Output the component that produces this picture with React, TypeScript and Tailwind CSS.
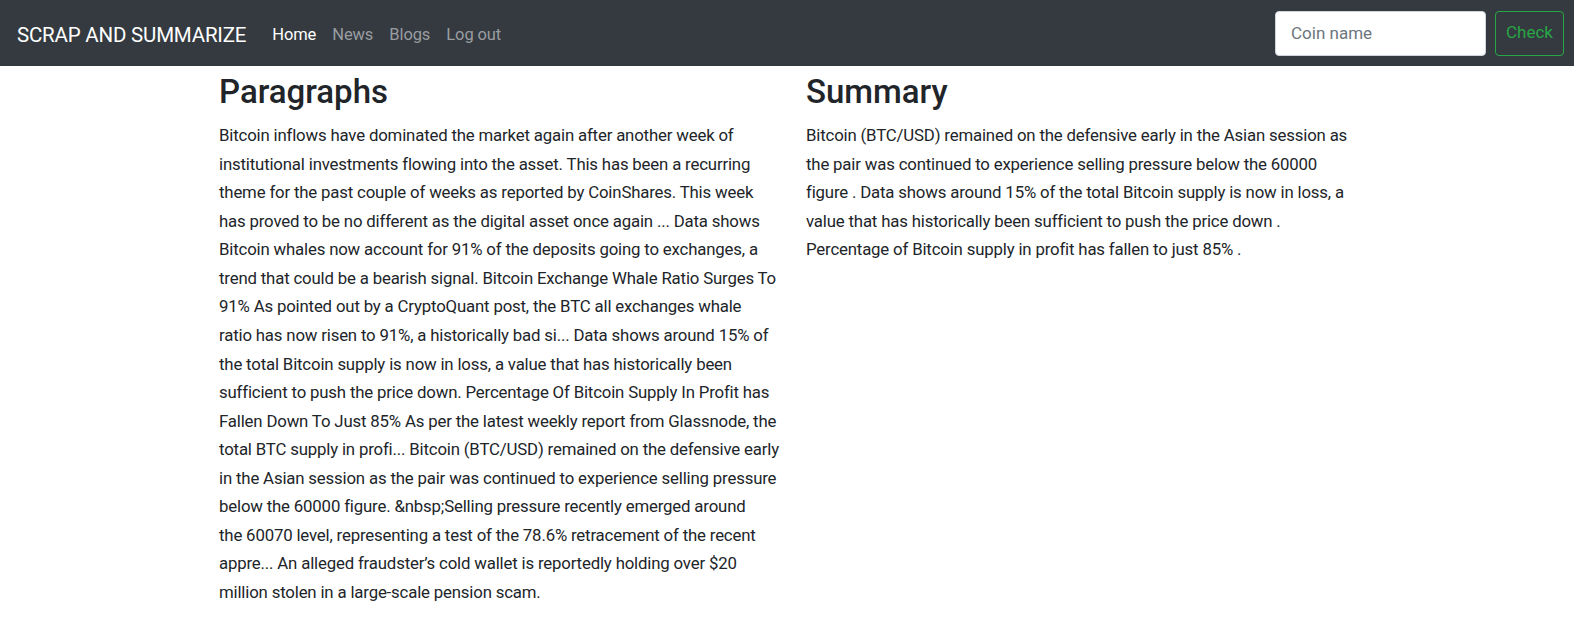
import React from "react";

const paragraphLines = [
  "Bitcoin inflows have dominated the market again after another week of",
  "institutional investments flowing into the asset. This has been a recurring",
  "theme for the past couple of weeks as reported by CoinShares. This week",
  "has proved to be no different as the digital asset once again ... Data shows",
  "Bitcoin whales now account for 91% of the deposits going to exchanges, a",
  "trend that could be a bearish signal. Bitcoin Exchange Whale Ratio Surges To",
  "91% As pointed out by a CryptoQuant post, the BTC all exchanges whale",
  "ratio has now risen to 91%, a historically bad si... Data shows around 15% of",
  "the total Bitcoin supply is now in loss, a value that has historically been",
  "sufficient to push the price down. Percentage Of Bitcoin Supply In Profit has",
  "Fallen Down To Just 85% As per the latest weekly report from Glassnode, the",
  "total BTC supply in profi... Bitcoin (BTC/USD) remained on the defensive early",
  "in the Asian session as the pair was continued to experience selling pressure",
  "below the 60000 figure. &nbsp;Selling pressure recently emerged around",
  "the 60070 level, representing a test of the 78.6% retracement of the recent",
  "appre... An alleged fraudster\u2019s cold wallet is reportedly holding over $20",
  "million stolen in a large-scale pension scam.",
];

const summaryLines = [
  "Bitcoin (BTC/USD) remained on the defensive early in the Asian session as",
  "the pair was continued to experience selling pressure below the 60000",
  "figure . Data shows around 15% of the total Bitcoin supply is now in loss, a",
  "value that has historically been sufficient to push the price down .",
  "Percentage of Bitcoin supply in profit has fallen to just 85% .",
];

function Lines({ lines }: { lines: string[] }) {
  return (
    <p className="mt-[2px] text-[16.8px] leading-[28.56px] tracking-[-0.17px] text-[#212529]">
      {lines.map((l, i) => (
        <React.Fragment key={i}>
          <span className="whitespace-nowrap">{l}</span>
          {i < lines.length - 1 && <br />}
        </React.Fragment>
      ))}
    </p>
  );
}

export default function App() {
  return (
    <div className="h-[620px] overflow-hidden bg-white font-['Roboto',sans-serif] text-[#212529]">
      <nav className="flex h-[66px] items-center bg-[#343a40] pl-[17px] pr-[10px]">
        <div className="flex items-center pt-[4px]">
          <span className="text-[20.5px] text-white tracking-[-0.2px]">SCRAP AND SUMMARIZE</span>
          <div className="ml-[26px] flex items-center gap-[16px] text-[16.5px] tracking-[-0.1px]">
            <a className="text-white">Home</a>
            <a className="text-[#9a9da0]">News</a>
            <a className="text-[#9a9da0]">Blogs</a>
            <a className="text-[#9a9da0]">Log out</a>
          </div>
        </div>
        <div className="ml-auto flex items-center gap-[9px]">
          <input
            placeholder="Coin name"
            className="h-[45px] w-[211px] rounded-[4px] border border-[#ced4da] bg-white px-[15px] text-[17px] text-[#495057] placeholder:text-[#6c757d] outline-none"
          />
          <button className="h-[45px] w-[69px] rounded-[4px] border border-[#28a745] text-[17px] text-[#28a745]">
            Check
          </button>
        </div>
      </nav>
      <div className="mx-auto flex w-[1176px] pl-[5px]">
        <div className="w-[587px] px-[15px]">
          <h2 className="mt-[5px] mb-[8px] text-[33px] font-medium leading-[42px] text-[#212529]">Paragraphs</h2>
          <Lines lines={paragraphLines} />
        </div>
        <div className="w-[585px] px-[15px]">
          <h2 className="mt-[5px] mb-[8px] text-[33px] font-medium leading-[42px] text-[#212529]">Summary</h2>
          <Lines lines={summaryLines} />
        </div>
      </div>
    </div>
  );
}
